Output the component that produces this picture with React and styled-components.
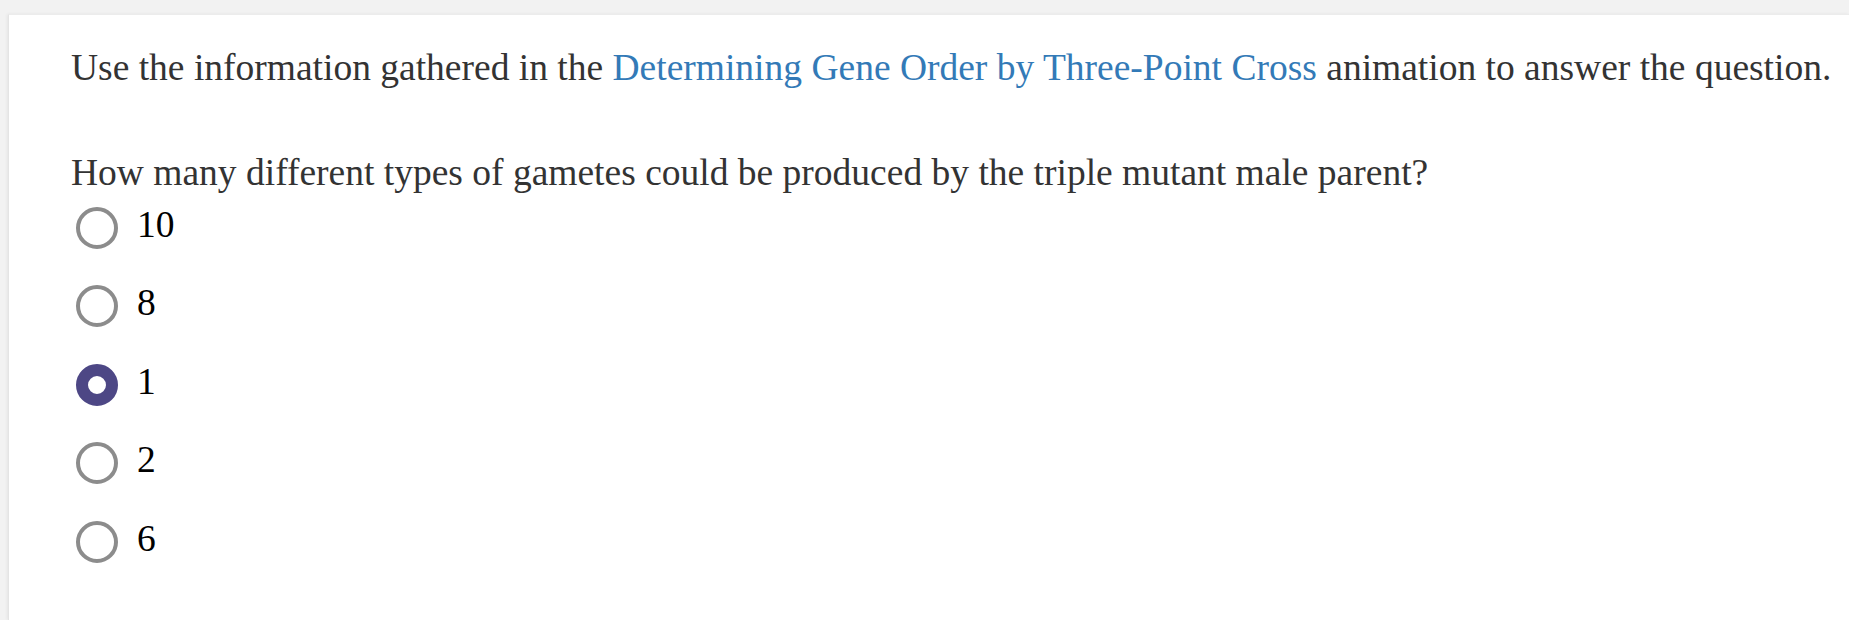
import React, { useState } from "react";
import styled, { createGlobalStyle } from "styled-components";

const GlobalStyle = createGlobalStyle`
  html, body {
    margin: 0;
    padding: 0;
    background: #f2f2f2;
  }
  body {
    font-family: "Liberation Serif", "Times New Roman", serif;
  }
`;

const Card = styled.div`
  margin: 14px 0 0 8px;
  min-height: calc(100vh - 14px);
  box-sizing: border-box;
  background: #ffffff;
  border-left: 1px solid #e4e4e4;
  border-top: 1px solid #ececec;
  box-shadow: -1px 0 3px rgba(0, 0, 0, 0.06);
  padding: 27px 0 0 62px;
`;

const Intro = styled.p`
  margin: 0;
  font-size: 37.5px;
  line-height: 52px;
  color: #333333;
  white-space: nowrap;
`;

const Link = styled.a`
  color: #337ab7;
  text-decoration: none;
`;

const Question = styled.p`
  margin: 53px 0 0 0;
  font-size: 37.5px;
  line-height: 52px;
  color: #333333;
`;

const Options = styled.div`
  display: flex;
  flex-direction: column;
  gap: 36.5px;
  margin-top: 7.5px;
  padding-left: 5px;
`;

const Option = styled.label`
  display: flex;
  align-items: center;
  gap: 19px;
  height: 42px;
  cursor: pointer;
`;

const Radio = styled.span`
  box-sizing: border-box;
  width: 42px;
  height: 42px;
  border-radius: 50%;
  flex: none;
  background: #ffffff;
  border: ${(p) => (p.$checked ? "12.5px solid #4d4785" : "4px solid #8c8c8c")};
`;

const OptionText = styled.span`
  font-size: 37.5px;
  line-height: 37px;
  color: #000000;
  padding-bottom: 7px;
`;

const choices = ["10", "8", "1", "2", "6"];

export default function App() {
  const [selected, setSelected] = useState("1");
  return (
    <>
      <GlobalStyle />
      <Card>
        <Intro>
          Use the information gathered in the{" "}
          <Link href="#">Determining Gene Order by Three-Point Cross</Link>{" "}
          animation to answer the question.
        </Intro>
        <Question>
          How many different types of gametes could be produced by the triple
          mutant male parent?
        </Question>
        <Options>
          {choices.map((c) => (
            <Option key={c} onClick={() => setSelected(c)}>
              <Radio $checked={selected === c} />
              <OptionText>{c}</OptionText>
            </Option>
          ))}
        </Options>
      </Card>
    </>
  );
}
